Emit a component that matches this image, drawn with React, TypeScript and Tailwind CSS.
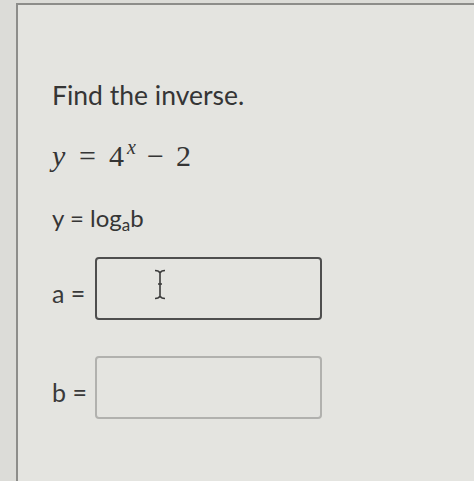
import React from "react";

const IBeam = () => (
  <svg width="12" height="31" viewBox="0 0 12 31" className="absolute left-[57px] top-[10px]">
    <path d="M1 1.5 Q5 1.5 6 4 Q7 1.5 11 1.5 M6 4 V27 M1 29.5 Q5 29.5 6 27 Q7 29.5 11 29.5 M4 15 H8" fill="none" stroke="#3a3a3a" strokeWidth="1.6" />
  </svg>
);

const AnswerRow = ({ label, active }: { label: string; active?: boolean }) => (
  <div className="flex items-center">
    <span className="mt-[10px] w-[43px] text-[25px] leading-none text-[#3a3a3a]">{label} =</span>
    <div
      className={`relative h-[63px] w-[227px] rounded-[4px] ${
        active ? "border-2 border-[#4e4e4e]" : "border-2 border-[#b1b1ae]"
      }`}
    >
      {active && <IBeam />}
    </div>
  </div>
);

export default function App() {
  return (
    <div className="h-[481px] w-[474px] overflow-hidden bg-[#dcdcd8] pl-[16px] pt-[3px] font-['Lato',sans-serif]">
      <div className="h-full border-l-2 border-t-2 border-[#8d8d8a] bg-[#e4e4e0] pl-[34px] pt-[75px] text-[#353535]">
        <h1 className="text-[26.5px] font-normal leading-[30px]">Find the inverse.</h1>

        <div className="mt-[31px] flex items-baseline font-['Liberation_Serif','DejaVu_Serif',serif] text-[30px] leading-[30px]">
          <span className="w-[15px] italic">y</span>
          <span className="ml-[9px] w-[23px] text-center">=</span>
          <span className="ml-[10px]">4</span>
          <span className="relative -top-[12px] ml-[3px] text-[20px] italic">x</span>
          <span className="ml-[11px] w-[17px] text-center">−</span>
          <span className="ml-[12px]">2</span>
        </div>

        <div className="mt-[29px] text-[24px] leading-[30px]">
          y = log<sub className="text-[17px]">a</sub>b
        </div>

        <div className="mt-[24px] flex flex-col gap-[36px]">
          <AnswerRow label="a" active />
          <AnswerRow label="b" />
        </div>
      </div>
    </div>
  );
}
